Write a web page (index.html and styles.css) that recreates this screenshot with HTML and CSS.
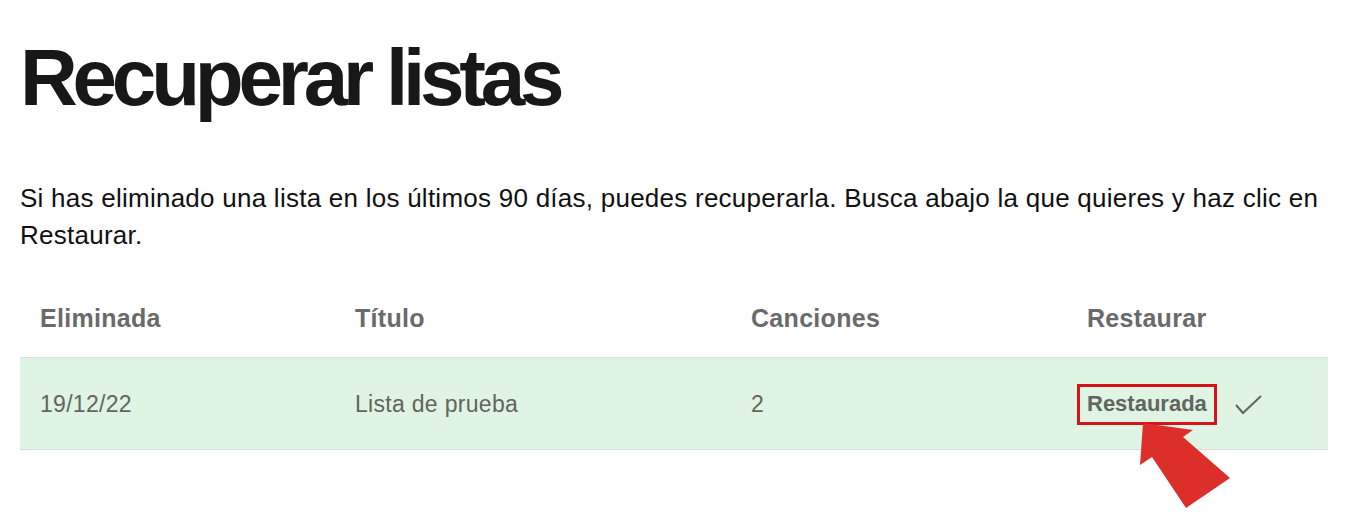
FILE: index.html
```html
<!DOCTYPE html>
<html lang="es">
<head>
<meta charset="utf-8">
<title>Recuperar listas</title>
<link rel="stylesheet" href="styles.css">
</head>
<body>
<main class="page">
  <h1 class="title">Recuperar listas</h1>
  <p class="intro">Si has eliminado una lista en los últimos 90 días, puedes recuperarla. Busca abajo la que quieres y haz clic en Restaurar.</p>
  <div class="table">
    <div class="row head">
      <div class="cell">Eliminada</div>
      <div class="cell">Título</div>
      <div class="cell">Canciones</div>
      <div class="cell">Restaurar</div>
    </div>
    <div class="row body">
      <div class="cell">19/12/22</div>
      <div class="cell">Lista de prueba</div>
      <div class="cell">2</div>
      <div class="cell restore">
        <span class="restored">Restaurada</span>
        <svg class="check" width="28" height="20" viewBox="0 0 28 20"><path d="M1 10 L8 18 L26 1" fill="none" stroke="#5f6760" stroke-width="2"/></svg>
        <span class="highlight"></span>
        <svg class="arrow" width="110" height="100" viewBox="0 0 110 100"><polygon points="13,8 10,50 22,42 56,93 100,63 53,22 63,15" fill="#dc2f2a"/></svg>
      </div>
    </div>
  </div>
</main>
</body>
</html>
```
FILE: styles.css
```css
html, body {
  margin: 0;
  padding: 0;
  background: #ffffff;
}
body {
  min-height: 527px;
}
.page {
  padding: 38px 20px 80px 20px;
  min-height: 527px;
  box-sizing: border-box;
  font-family: "Liberation Sans", Arial, sans-serif;
}
.title {
  margin: 0;
  font-size: 80px;
  line-height: 80px;
  font-weight: 700;
  letter-spacing: -5.2px;
  color: #181818;
}
.intro {
  margin: 62px 0 0 0;
  font-size: 26px;
  line-height: 37px;
  letter-spacing: 0.25px;
  color: #111111;
  width: 1330px;
}
.table {
  margin-top: 36px;
  width: 1308px;
}
.row {
  display: grid;
  grid-template-columns: 315px 396px 336px 1fr;
}
.head {
  border-bottom: 1px solid #dedede;
}
.head .cell {
  padding: 13px 0 24px 20px;
  font-size: 25px;
  line-height: 30px;
  font-weight: 700;
  letter-spacing: 0.3px;
  color: #6a6a6a;
}
.body {
  background: #dff4e2;
  border-bottom: 1px solid #d8dcd8;
}
.body .cell {
  padding: 31px 0 30px 20px;
  font-size: 23px;
  line-height: 30px;
  letter-spacing: 0.3px;
  color: #5f6660;
}
.restore {
  position: relative;
  display: flex;
  align-items: center;
  gap: 28px;
}
.restored {
  font-size: 22px;
  font-weight: 700;
  letter-spacing: 0;
  color: #5f6660;
}
.check {
  display: block;
  margin-top: 2px;
}
.highlight {
  position: absolute;
  left: 10px;
  top: 26px;
  width: 134px;
  height: 35px;
  border: 3px solid #d5131b;
}
.arrow {
  position: absolute;
  left: 63px;
  top: 57px;
}
```
